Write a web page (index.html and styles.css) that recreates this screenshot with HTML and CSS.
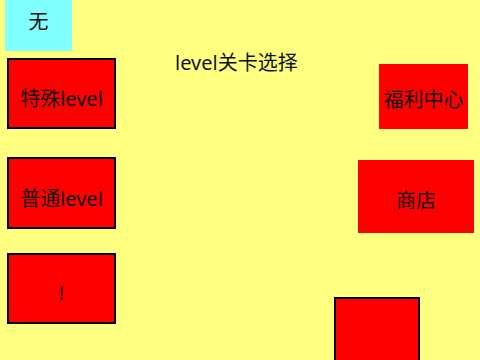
FILE: index.html
```html
<!DOCTYPE html>
<html>
<head>
<meta charset="utf-8">
<link rel="stylesheet" href="styles.css">
</head>
<body>
<div class="stage">
  <div class="btn none">无</div>
  <div class="title">level关卡选择</div>
  <div class="btn level special">特殊level</div>
  <div class="btn level normal">普通level</div>
  <div class="btn level bang">!</div>
  <div class="btn welfare">福利中心</div>
  <div class="btn shop">商店</div>
  <div class="btn level bottom"></div>
</div>
</body>
</html>
```
FILE: styles.css
```css
html, body {
  margin: 0;
  padding: 0;
  background: #ffff80;
}
.stage {
  position: relative;
  width: 480px;
  height: 360px;
  overflow: hidden;
  background: #ffff80;
  font-family: "Noto Sans", "Noto Sans CJK SC", sans-serif;
  font-size: 20px;
  color: #111;
}
.btn {
  position: absolute;
  box-sizing: border-box;
  display: flex;
  align-items: center;
  justify-content: center;
  background: #ff0000;
  white-space: nowrap;
  overflow: hidden;
}
.level {
  border: 2px solid #000;
  padding-top: 8px;
}
.none {
  left: 5px; top: 0; width: 67px; height: 51px;
  background: #80ffff;
  padding-bottom: 10px;
}
.title {
  position: absolute;
  left: 175px; top: 49px;
  line-height: 28px;
}
.special { left: 7px; top: 58px; width: 109px; height: 71px; }
.normal { left: 7px; top: 157px; width: 109px; height: 72px; }
.bang { left: 7px; top: 253px; width: 109px; height: 71px; }
.welfare { left: 379px; top: 64px; width: 89px; height: 65px; padding-top: 4px; }
.shop { left: 358px; top: 160px; width: 116px; height: 73px; padding-top: 6px; }
.bottom { left: 334px; top: 297px; width: 86px; height: 80px; }
```
